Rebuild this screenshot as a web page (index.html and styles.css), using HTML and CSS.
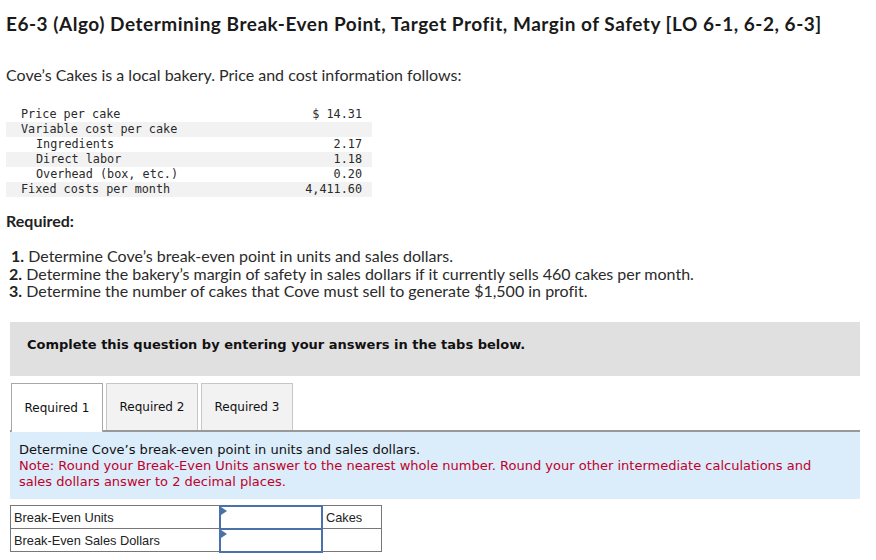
FILE: index.html
```html
<!DOCTYPE html>
<html>
<head>
<meta charset="utf-8">
<link rel="stylesheet" href="styles.css">
</head>
<body>
<div class="page">
  <h1 class="title">E6-3 (Algo) Determining Break-Even Point, Target Profit, Margin of Safety [LO 6-1, 6-2, 6-3]</h1>
  <p class="intro">Cove’s Cakes is a local bakery. Price and cost information follows:</p>
  <table class="data">
    <tr><td>Price per cake</td><td class="num">$ 14.31</td></tr>
    <tr class="alt"><td>Variable cost per cake</td><td class="num"></td></tr>
    <tr><td class="ind">Ingredients</td><td class="num">2.17</td></tr>
    <tr class="alt"><td class="ind">Direct labor</td><td class="num">1.18</td></tr>
    <tr><td class="ind">Overhead (box, etc.)</td><td class="num">0.20</td></tr>
    <tr class="alt"><td>Fixed costs per month</td><td class="num">4,411.60</td></tr>
  </table>
  <p class="req">Required:</p>
  <ol class="list">
    <li><b class="n n1">1.</b> Determine Cove’s break-even point in units and sales dollars.</li>
    <li><b class="n">2.</b> Determine the bakery’s margin of safety in sales dollars if it currently sells 460 cakes per month.</li>
    <li><b class="n">3.</b> Determine the number of cakes that Cove must sell to generate $1,500 in profit.</li>
  </ol>
  <div class="banner">Complete this question by entering your answers in the tabs below.</div>
  <div class="tabs">
    <div class="tab active">Required 1</div>
    <div class="tab">Required 2</div>
    <div class="tab">Required 3</div>
  </div>
  <div class="panel">
    <div>Determine Cove’s break-even point in units and sales dollars.</div>
    <div class="note">Note: Round your Break-Even Units answer to the nearest whole number. Round your other intermediate calculations and sales dollars answer to 2 decimal places.</div>
  </div>
  <table class="answer">
    <tr><td class="lbl">Break-Even Units</td><td class="inp"><span class="flag"></span></td><td class="unit">Cakes</td></tr>
    <tr><td class="lbl">Break-Even Sales Dollars</td><td class="inp"><span class="flag"></span></td><td class="unit"></td></tr>
  </table>
</div>
</body>
</html>
```
FILE: styles.css
```css
html, body { margin: 0; padding: 0; background: #fff; }
.page { padding: 0 6px; font-family: Lato, "Open Sans", sans-serif; color: #222; font-variant-ligatures: none; }
.title { margin: 0; padding-top: 13px; font-size: 19px; font-weight: 700; line-height: 22px; color: #1a1a1a; letter-spacing: 0.52px; white-space: nowrap; }
.intro { margin: 0; padding-top: 31px; font-size: 16px; line-height: 18px; color: #2b2b2b; }
.data { border-collapse: collapse; margin-top: 23px; width: 366px; font-family: "DejaVu Sans Mono", monospace; font-size: 11.8px; color: #2a2a2a; }
.data td { padding: 0 0 0 15px; height: 15px; line-height: 15px; white-space: pre; }
.data td.ind { padding-left: 30px; }
.data td.num { text-align: right; padding: 0 10px 0 0; }
.data tr.alt td { background: #f2f2f2; }
.req { margin: 0; padding-top: 15px; font-size: 16px; font-weight: 700; line-height: 18px; color: #222; }
.list { list-style: none; margin: 0; padding: 17px 0 0 3px; font-size: 16px; line-height: 17.5px; color: #2b2b2b; }
.list .n { color: #222; }
.list .n1 { margin-left: 2px; }
.banner { margin: 22px 10px 0 4px; height: 54px; background: #e0e0e0; box-sizing: border-box; padding: 0 0 8px 17px; display: flex; align-items: center; font-family: "DejaVu Sans", Verdana, sans-serif; font-weight: 700; font-size: 13px; color: #111; }
.tabs { display: flex; gap: 3px; margin: 7px 0 0 5px; height: 47px; }
.tab { width: 92px; box-sizing: border-box; border: 1px solid #c6c6c6; border-bottom: none; background: #f2f2f2; display: flex; align-items: center; justify-content: center; font-family: "DejaVu Sans", Verdana, sans-serif; font-size: 12px; color: #111; }
.tab.active { background: #fff; border-color: #a8a8a8; position: relative; z-index: 1; height: 49px; margin-bottom: -2px; }
.panel { margin: 0 10px 0 4px; border-top: 2px solid #999; background: #dbecfa; padding: 10px 22px 9px 9px; font-family: "DejaVu Sans", Verdana, sans-serif; font-size: 13px; line-height: 16px; color: #111; height: 48px; }
.note { color: #c0002b; }
.answer { border-collapse: collapse; margin: 6px 0 0 4px; font-family: "Liberation Sans", Arial, sans-serif; font-size: 12.8px; color: #222; }
.answer td { border: 1px solid #777; height: 21px; padding: 0 3px; }
.answer .lbl { width: 202px; }
.answer .inp { width: 100px; border: 2px solid #4a72a8; padding: 0; position: relative; }
.answer .unit { width: 52px; }
.flag { position: absolute; left: 0; top: 0; width: 0; height: 0; border-top: 4px solid transparent; border-bottom: 4px solid transparent; border-left: 6px solid #4a72a8; }
```
